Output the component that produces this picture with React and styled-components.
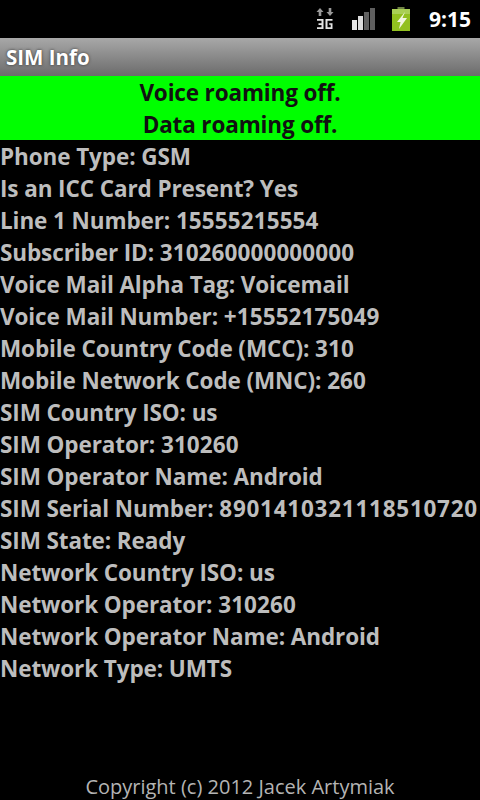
import React from "react";
import styled, { createGlobalStyle } from "styled-components";

const rows = [
  { label: "Phone Type: GSM" },
  { label: "Is an ICC Card Present? Yes" },
  { label: "Line 1 Number: ", value: "15555215554" },
  { label: "Subscriber ID: ", value: "310260000000000" },
  { label: "Voice Mail Alpha Tag: Voicemail" },
  { label: "Voice Mail Number: ", value: "+15552175049" },
  { label: "Mobile Country Code (MCC): ", value: "310" },
  { label: "Mobile Network Code (MNC): ", value: "260" },
  { label: "SIM Country ISO: us" },
  { label: "SIM Operator: ", value: "310260" },
  { label: "SIM Operator Name: Android" },
  { label: "SIM Serial Number: ", value: "8901410321118510720", wide: true },
  { label: "SIM State: Ready" },
  { label: "Network Country ISO: us" },
  { label: "Network Operator: ", value: "310260" },
  { label: "Network Operator Name: Android" },
  { label: "Network Type: UMTS" },
];

const App = () => {
  return (
    <Screen>
      <GlobalStyle />
      <StatusBar>
        <DataIcon viewBox="0 0 18 24">
          <path d="M4 1l3.5 4H5.3v4H2.700V5H.5zM14 9l3.500-4h-2.200V1h-2.600v4h-2.200z" fill="#9a9a9a" />
          <path d="M1 12h6.500v10H1v-1.800h4.500v-2.300H2.500v-1.700h3v-2.400H1zM16.500 12v1.800h-5v6.400h3.200v-2.400h-1.500v-1.600h3.300V22h-7v-10z" fill="#e4e4e4" />
        </DataIcon>
        <SignalIcon viewBox="0 0 24 22">
          <rect x="0" y="12" width="5" height="10" fill="#e6e6e6" />
          <rect x="6" y="8" width="5" height="14" fill="#dcdcdc" />
          <rect x="12" y="4" width="5" height="18" fill="#5f5f5f" />
          <rect x="18" y="0" width="5" height="22" fill="#5f5f5f" />
        </SignalIcon>
        <BatteryIcon viewBox="0 0 18 24">
          <rect x="5.500" y="0" width="7" height="3" fill="#6f8244" />
          <rect x="0" y="2" width="18" height="22" fill="#92c020" />
          <rect x="0" y="2" width="18" height="5" fill="#a9cf55" />
          <path d="M13 5L5 15h3.500L7 22l8-11h-4.500z" fill="#f2f6e2" />
        </BatteryIcon>
        <Clock>9:15</Clock>
      </StatusBar>
      <TitleBar>SIM Info</TitleBar>
      <RoamingBanner>
        <BannerLine>Voice roaming off.</BannerLine>
        <BannerLine>Data roaming off.</BannerLine>
      </RoamingBanner>
      <InfoList>
        {rows.map((row) => (
          <InfoRow key={row.label}>
            {row.label}
            {row.value && <Value $wide={row.wide}>{row.value}</Value>}
          </InfoRow>
        ))}
      </InfoList>
      <Copyright>Copyright (c) 2012 Jacek Artymiak</Copyright>
    </Screen>
  );
};

export default App;

const GlobalStyle = createGlobalStyle`
  html, body {
    margin: 0;
    padding: 0;
    background: #000;
  }
`;

const Screen = styled.div`
  width: 480px;
  height: 800px;
  display: flex;
  flex-direction: column;
  overflow: hidden;
  background: #000;
  font-family: "Open Sans", "Noto Sans", sans-serif;
`;

const StatusBar = styled.div`
  height: 38px;
  flex: none;
  display: flex;
  align-items: center;
  padding-right: 9px;
  box-sizing: border-box;
  justify-content: flex-end;
`;

const DataIcon = styled.svg`
  width: 18px;
  height: 24px;
  margin-right: 18px;
`;

const SignalIcon = styled.svg`
  width: 24px;
  height: 22px;
  margin-right: 16px;
`;

const BatteryIcon = styled.svg`
  width: 18px;
  height: 24px;
  margin-right: 19px;
`;

const Clock = styled.div`
  color: #fff;
  font-size: 21px;
  font-weight: 700;
`;

const TitleBar = styled.div`
  height: 38px;
  flex: none;
  box-sizing: border-box;
  padding-left: 6px;
  display: flex;
  align-items: center;
  background: linear-gradient(#a8a8a8, #6b6b6b);
  color: #fff;
  font-size: 20.5px;
  font-weight: 700;
  text-shadow: 0 0 3px #333;
`;

const RoamingBanner = styled.div`
  flex: none;
  background: #00ff00;
`;

const BannerLine = styled.div`
  height: 32px;
  line-height: 34px;
  text-align: center;
  color: #111;
  font-size: 22.5px;
  font-weight: 700;
  letter-spacing: -0.15px;
`;

const InfoList = styled.div`
  flex: 1;
`;

const InfoRow = styled.div`
  height: 32px;
  line-height: 34px;
  color: #bdbdbd;
  font-size: 22.5px;
  font-weight: 700;
  letter-spacing: -0.1px;
  white-space: nowrap;
`;

const Value = styled.span`
  letter-spacing: ${(props) => (props.$wide ? "0.75px" : "0.1px")};
`;

const Copyright = styled.div`
  height: 28px;
  line-height: 30px;
  text-align: center;
  color: #b4b4b4;
  font-size: 20px;
`;
